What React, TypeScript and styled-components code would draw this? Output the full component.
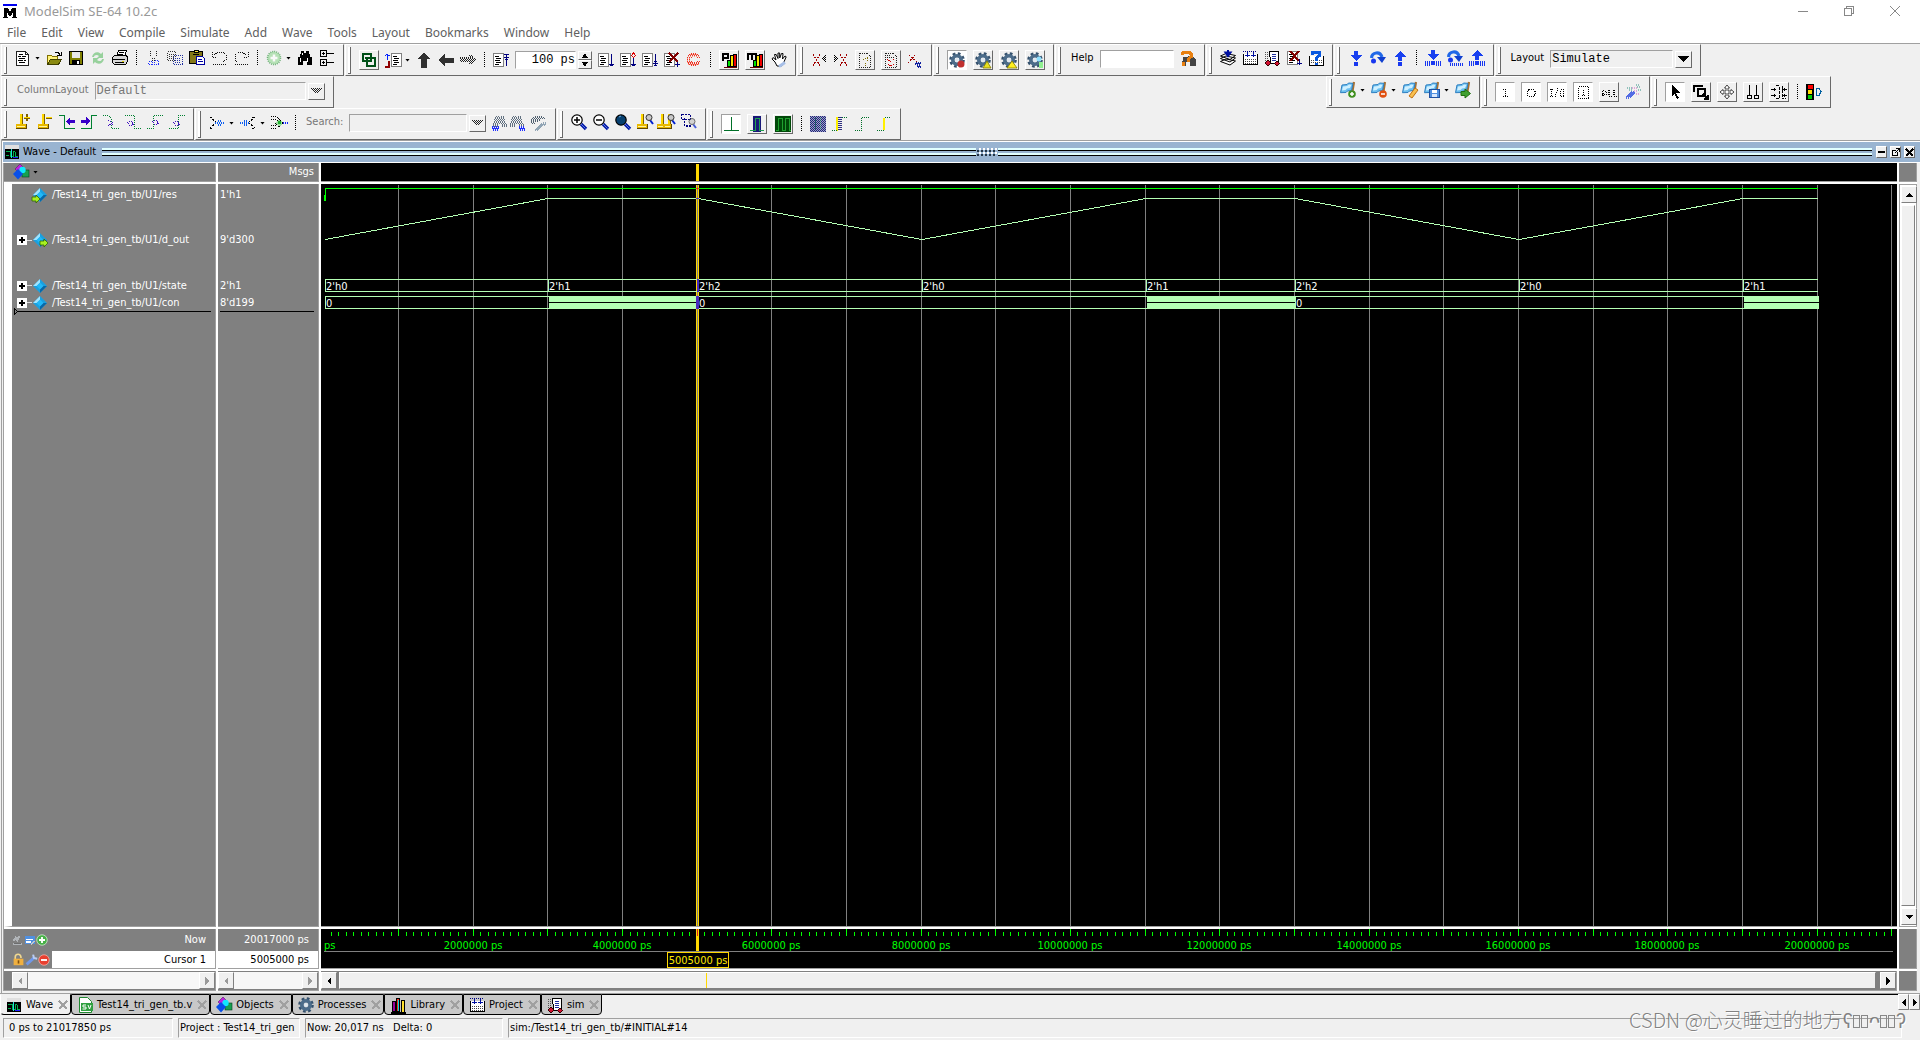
import React, { ReactNode } from 'react';
import styled, { createGlobalStyle, css } from 'styled-components';

const ui = '"DejaVu Sans Condensed", "DejaVu Sans", "Noto Sans", sans-serif';
const menuFont = '"Noto Sans", "Noto Sans CJK SC", sans-serif';
const mono = '"Liberation Mono", monospace';
const face = '#f0f0f0';
const shade = '#a0a0a0';
const dark = '#696969';
const grey = '#808080';
const signal = '#b4ffb4';
const lime = '#00ff00';
const gold = '#ffd700';

const GlobalStyle = createGlobalStyle`
  * { box-sizing: border-box; }
  body { margin: 0; background: ${face}; font: 11px/14px ${ui}; color: #000; overflow: hidden; }
  button, input, select { font: inherit; color: inherit; margin: 0; padding: 0; border: 0; border-radius: 0; background: none; }
`;

const raised = css`
  border: 1px solid;
  border-color: #fff ${dark} ${dark} #fff;
`;
const inset = css`
  border: 1px solid;
  border-color: ${shade} #fff #fff ${shade};
`;

/* ---------- icons ---------- */

const Svg = styled.svg`
  display: block;
  flex: none;
  fill: none;
  overflow: visible;
  shape-rendering: crispEdges;
`;

const Doc = ({ x = 1, lines = '#000' }: { x?: number; lines?: string }) => (
  <>
    <rect x={x} y="1" width="11" height="14" fill="#808080" />
    <rect x={x + 1} y="2" width="9" height="12" fill="#fff" />
    <path d={`M${x + 2} 4.5h4M${x + 3} 6.5h5M${x + 2} 8.5h5M${x + 3} 10.5h5M${x + 2} 12.5h4`} stroke={lines} />
  </>
);
const Gear = ({ children }: { children?: ReactNode }) => (
  <g shapeRendering="auto">
    <circle cx="8" cy="8" r="6.3" stroke="#34506c" strokeWidth="3" strokeDasharray="2.6 2.35" />
    <circle cx="8" cy="8" r="4.2" stroke="#4c6c8a" strokeWidth="3.6" />
    <circle cx="8" cy="8" r="2" fill="#dfe8f0" />
    {children}
  </g>
);
const Flag = ({ children }: { children?: ReactNode }) => (
  <g shapeRendering="auto">
    <path d="M14 0l-2 12" stroke="#a87030" strokeWidth="2.2" />
    <path d="M2 3l5-.5L8.500 1l4.500.3-1.500 7.200-4 .5L6 10.500l-5.500.2z" fill="#6cc0f0" stroke="#2f7fc0" />
    <path d="M3 4.500l4-.5 2-1.500 2.500.3L10 6l-3 .5-1.500 1.500-3.500.5z" fill="#d0f0ff" />
    {children}
  </g>
);
const Gold = ({ x = 0, w = 11 }: { x?: number; w?: number }) => (
  <>
    <path d={`M${x + 7} 0v10`} stroke="#806000" strokeWidth="2" />
    <path d={`M${x + 6} 0v10`} stroke="#ffd800" strokeWidth="2" />
    <rect x={x + 1} y="10" width={w} height="5" fill="#604800" />
    <rect x={x + 1} y="10" width={w - 1} height="4" fill="#e8b800" />
    <rect x={x + 2} y="12" width={w - 3} height="1" fill="#fff4a0" />
  </>
);
const Lens = ({ fill, children }: { fill: string; children?: ReactNode }) => (
  <g shapeRendering="auto">
    <path d="M10 10l5 5" stroke="#0018a8" strokeWidth="3.4" />
    <path d="M10 10l4.500 4.500" stroke="#6078e0" strokeWidth="1" />
    <circle cx="6" cy="6" r="5.2" fill={fill} stroke="#000" strokeWidth="1.2" />
    {children}
  </g>
);
const MiniLens = () => (
  <g shapeRendering="auto">
    <path d="M13 6l3 4" stroke="#0020d0" strokeWidth="2" />
    <circle cx="12" cy="3.500" r="3" fill="#c8c8c8" stroke="#333" />
  </g>
);
const DimBinoc = ({ x = 0, tail }: { x?: number; tail: string }) => (
  <>
    <path
      d={`M${x + 4} 1.500h3M${x + 9} 1.500h3M${x + 3} 3.500h10M${x + 3} 5.500h10M${x + 2} 7.500h12M${x + 1} 9.500h5M${x + 10} 9.500h5M${x + 1} 11.500h5M${x + 10} 11.500h5M${x + 3} 2.500h10M${x + 2} 4.500h11M${x + 2} 6.500h12M${x + 1} 8.500h14M${x + 1} 10.500h5M${x + 10} 10.500h5`}
      stroke="#607080"
      strokeDasharray="1 1"
    />
    <path d={tail} stroke="#2030ff" strokeWidth="3" strokeDasharray="1 1" />
  </>
);
const Down = () => <path d="M6 1h4v4h4l-6 6-6-6h4z" fill="#1840f0" />;
const Up = () => <path d="M6 11h4V7h4L8 1 2 7h4z" fill="#1840f0" />;
const Over = () => (
  <g shapeRendering="auto">
    <path d="M1.500 8C2 2 10 1 12 7" stroke="#2068e8" strokeWidth="3.200" />
    <path d="M7 7h9l-4 6z" fill="#1040d0" />
    <circle cx="3.500" cy="11" r="2.500" fill="#1838f0" />
  </g>
);
const Bits = () => (
  <>
    <rect x="6" y="11" width="4" height="4" fill="#1838f0" />
    <path d="M0 13.500h5M11 13.500h5" stroke="#1838f0" strokeWidth="5" strokeDasharray="1 1" />
  </>
);
const WaveMark = () => (
  <>
    <rect x="1" y="1" width="14" height="14" fill="#000" />
    <rect x="1" y="1" width="14" height="4" fill="#e0e0e0" />
    <path d="M2 7.500h4v5h3v-5h2M2 11.500h3M11 8v4h3" stroke="#00b050" />
    <path d="M7.500 5v9" stroke="#20e0e0" />
    <path d="M9 13.500h5" stroke="#2020ff" />
  </>
);
const Objects = () => (
  <g shapeRendering="auto">
    <path d="M7 0l5 5-5 5-5-5z" fill="#c020e0" stroke="#502060" strokeWidth=".6" />
    <rect x="9" y="6" width="7" height="7" fill="#18a050" stroke="#084020" strokeWidth=".6" />
    <circle cx="9.500" cy="6" r="3.200" fill="#10e8ff" />
    <path d="M5 5l5 5-5 5.500L0 10z" fill="#0850e8" />
  </g>
);
const Diamond = ({ children }: { children?: ReactNode }) => (
  <g shapeRendering="auto">
    <path d="M8 1l7 7-7 7-7-7z" fill="#18a0e0" />
    <path d="M8 1L1 8h4l3-3z" fill="#a0e4ff" />
    <path d="M8 15l7-7h-4l-3 3z" fill="#0868a8" />
    <path d="M8 4.500L11.500 8 8 11.500 4.500 8z" fill="#20b8f8" />
    {children}
  </g>
);
const arrowGreen = <path d="M0 0h4v-2l4 4-4 4V4H0z" fill="#a8f020" stroke="#306800" strokeWidth=".8" />;
const Bars = ({ letter }: { letter: ReactNode }) => (
  <>
    <rect x="6.500" y="8.500" width="3" height="6" fill="#00e000" stroke="#000" />
    <rect x="9.500" y="3.500" width="3" height="11" fill="#ffe800" stroke="#000" />
    <rect x="12.500" y="2.500" width="3" height="12" fill="#f00000" stroke="#000" />
    <path d="M3 15.500h13" stroke="#600" />
    <g stroke="#000" strokeWidth="2">{letter}</g>
  </>
);
const SimMark = () => (
  <>
    <path d="M5 1h10l-1 5 1 7H7L6 7z" fill="#fff" stroke="#000" />
    <path d="M8 4.500h4M8 6.500h4M8 8.500h4M8 10.500h4" stroke="#2030a0" />
    <path d="M1 2v9M3 2v7" stroke="#555" strokeDasharray="1 1" />
    <path d="M4 10l3 3-3 3-3-3zM13 11l2.500 2.500L13 16l-2.500-2.500z" fill="#d01030" stroke="#300" />
  </>
);
const ProjMark = () => (
  <>
    <path d="M1.500 4v10.500h14V4" stroke="#000" fill="#fff" />
    <path d="M3 9.500h11M3 11.500h11M3 13.500h11" stroke="#444" strokeDasharray="1 1" />
    <path d="M1 1.500h14" stroke="#000080" strokeDasharray="1 1" />
    <path d="M5.500 2v5M11.500 2v5M3 5.500h5M9 5.500h5" stroke="#0010a0" />
  </>
);

const icons: Record<string, ReactNode> = {
  new: (
    <>
      <path d="M1.500 1.500h9l3 3v11h-12z" fill="#fff" stroke="#222" />
      <path d="M10.500 1.500v3h3" stroke="#222" />
      <path d="M4 4.500h4M3 6.500h3M7 6.500h4M4 8.500h6M3 10.500h5M9 10.500h2M4 12.500h6" stroke="#000" />
    </>
  ),
  open: (
    <>
      <path d="M1.500 14.500V5.500h4l1 1h5v3" fill="#fff27a" stroke="#807000" />
      <path d="M1.500 14.500l3-5h11l-3 5z" fill="#8a8a10" stroke="#404000" />
      <path d="M9 2.500h3l2 2M15 2v3.500h-4" stroke="#000" />
    </>
  ),
  save: (
    <>
      <rect x="1.500" y="1.500" width="13" height="13" fill="#808000" stroke="#000" />
      <rect x="4" y="2" width="8" height="6" fill="#e8e8e8" />
      <rect x="4" y="10" width="8" height="5" fill="#000" />
      <rect x="9" y="11" width="2" height="3" fill="#fff" />
    </>
  ),
  refresh: (
    <g shapeRendering="auto" opacity=".55">
      <path d="M2 7c1-5 6-6 9-3l2-2v6H7l2-2C7 4 4 5 4 7z" fill="#50b858" />
      <path d="M14 9c-1 5-6 6-9 3l-2 2V8h6l-2 2c2 2 5 1 5-1z" fill="#50b858" />
    </g>
  ),
  print: (
    <>
      <path d="M4.500 6.500l2-6h8l-2 6" fill="#fff" stroke="#000" />
      <path d="M.5 7.500l2-2h11l2 1v5l-2 3H2.500l-2-2z" fill="#d8d8d8" stroke="#000" />
      <path d="M7 2.500h5M6 4.500h5M1 9.500h12M3 12.500h9" stroke="#000" />
      <rect x="10" y="11" width="2" height="1" fill="#e0d000" />
    </>
  ),
  cut: (
    <g strokeDasharray="1 1">
      <path d="M5.500 1v4l4 6M11.500 1v4l-4 6" stroke="#222" />
      <path d="M3.500 11.500h4v3h-4zM9.500 10.500h4v4h-4z" stroke="#2030ff" />
    </g>
  ),
  copy: (
    <g strokeDasharray="1 1">
      <path d="M.5 1.500h8v9h-8zM2 4.500h5M2 6.500h5M2 8.500h5" stroke="#333" />
      <path d="M6.500 5.500h9v9h-9zM8 8.500h6M8 10.500h6M8 12.500h6" stroke="#2030a0" />
    </g>
  ),
  paste: (
    <>
      <rect x=".5" y="1.500" width="13" height="12" fill="#857818" stroke="#000" />
      <path d="M4 4.500h6M5 2h4v-2h-4z" stroke="#000" fill="#ffe840" />
      <path d="M7.500 6.500h6l2 2v6h-8z" fill="#fff" stroke="#0000a0" />
      <path d="M9 9.500h4M9 11.500h5" stroke="#0000a0" />
    </>
  ),
  undo: <path d="M1 2v5h5M3 5l4-3h5l3 3v5l-3 2M2 14.500h13" stroke="#111" strokeDasharray="1 1" />,
  redo: <path d="M15 2v5h-5M13 5L9 2H5L2 5v4l2 3M2 14.500h13" stroke="#111" strokeDasharray="1 1" />,
  add: (
    <g shapeRendering="auto" opacity=".6">
      <circle cx="8" cy="8" r="6.500" fill="#90d890" stroke="#208830" strokeWidth="1.500" strokeDasharray="1 1" />
      <path d="M8 4.500v7M4.500 8h7" stroke="#fff" strokeWidth="2.500" />
    </g>
  ),
  find: (
    <>
      <path d="M4 1h3v2h2V1h3v3h1v3h2v8h-5v-4H6v4H1V7h2V4h1z" fill="#000" />
      <path d="M3.500 8v4M10.500 8v4M5.500 3v2" stroke="#fff" />
    </>
  ),
  expand: <path d="M1.500.5h6v6h-6zM1.500 9.500h6v6h-6zM8 3.500h7M8 12.500h7M3 3.500h3M4.500 2v3M3 12.500h3M4.500 11v3" stroke="#000" />,
  env: (
    <g strokeWidth="2" stroke="#005018">
      <rect x="2" y="2" width="8" height="7" />
      <rect x="6" y="6" width="8" height="8" />
      <path d="M4 6h6v4" />
    </g>
  ),
  trace: (
    <>
      <Doc x={6} />
      <path d="M5 3H2v5M0 4l2-2 2 2" stroke="#0020ff" />
      <path d="M0 15h4V9" stroke="#900000" strokeWidth="2" />
    </>
  ),
  up: <path d="M8 0l6.500 7H11v9H5V7H1.500z" fill="#303030" />,
  left: <path d="M0 8l7-6v3.500h9v5H7V14z" fill="#303030" />,
  right: <path d="M0 6.500h15M1 7.500h15M0 8.500h16M1 9.500h14M0 5.500h13M9 3.500h3M10 4.500h3M9 11.500h3M10 10.500h3" stroke="#222" strokeDasharray="1 1" />,
  restart: (
    <>
      <Doc x={0} />
      <path d="M13.500 2v12M11 2.500h5M11 5.500h5M12 7.500h3" stroke="#000080" />
    </>
  ),
  run: (
    <>
      <Doc x={0} />
      <path d="M13.500 2v12M11 12.500h5M12 13.500h3" stroke="#000080" />
    </>
  ),
  runCont: (
    <>
      <Doc x={0} />
      <path d="M13.500 5v9M11 12.500h5M12 13.500h3" stroke="#000080" />
      <path d="M13.500 1l2 2.500-2 2-2-2z" stroke="#e00000" />
    </>
  ),
  runAll: (
    <>
      <Doc x={0} />
      <path d="M13.500 2v12M11 11.500h5M12 13.500h3M12 9.500h3" stroke="#000080" />
    </>
  ),
  brk: (
    <>
      <Doc x={0} />
      <path d="M13.500 8v7M11 12.500h5" stroke="#000080" />
      <path d="M5 1l9 9M14 1l-9 9" stroke="#800000" strokeWidth="2" />
    </>
  ),
  stop: (
    <>
      <path d="M5 1.500h6M3 2.500h10M2 3.500h12M2 4.500h12M1 5.500h5M11 5.500h4M1 6.500h4M1 7.500h4M1 8.500h4M1 9.500h5M11 9.500h4M2 10.500h12M2 11.500h12M3 12.500h10M5 13.500h6" stroke="#f03020" strokeDasharray="1 1" />
      <path d="M4 2h8M2 4h12M1 6h4M1 8h3M1 10h5M2 12h12" stroke="#f4a090" strokeDasharray="1 1" />
    </>
  ),
  perf: <Bars letter={<path d="M2 9V2h5v4H2" />} />,
  mem: <Bars letter={<path d="M1 8V2h8v6M5 2v6" />} />,
  hand: (
    <g shapeRendering="auto">
      <path d="M4 10L1 7l1-1.500L5 8 3.500 2.500h1.700L7 6.500V1h1.700V6L10.500 1.500H12L11.500 7l2.500-3 1.200.8L12.500 11l-2 3H6z" fill="#fff" stroke="#000" />
      <path d="M8 14.500l6-4" stroke="#a8c0e8" strokeWidth="3" />
    </g>
  ),
  exPrev: (
    <>
      <path d="M2 2l7 12M9 2L2 14" stroke="#a00000" strokeDasharray="2 1" />
      <path d="M14.500 3v7M13.500 4v5M12.500 5v3M11.500 6v1" stroke="#000" strokeDasharray="1 1" />
    </>
  ),
  exNext: (
    <>
      <path d="M7 2l7 12M14 2L7 14" stroke="#a00000" strokeDasharray="2 1" />
      <path d="M1.500 3v7M2.500 4v5M3.500 5v3M4.500 6v1" stroke="#000" strokeDasharray="1 1" />
    </>
  ),
  docAsk: (
    <g strokeDasharray="1 1">
      <path d="M2.500 1.500h8l3 3v11h-11z" stroke="#222" />
      <path d="M6 7h2l2-1v3l-2 2v3" stroke="#807000" />
    </g>
  ),
  docX: (
    <g strokeDasharray="1 1">
      <path d="M2.500 1.500h8l3 3v11h-11zM4 3.500h4M4 5.500h7" stroke="#222" />
      <path d="M4 7l4 3 4-3M5 12l3 2 3-2" stroke="#d00000" />
    </g>
  ),
  exclude: (
    <>
      <path d="M1 11L9 2M2 3l8 7" stroke="#a00000" strokeDasharray="2 1" />
      <path d="M9 10.500h5M8 11.500h6M10 13.500h4M11 14.500h3" stroke="#1020a0" strokeWidth="2" strokeDasharray="1 1" />
    </>
  ),
  gearStop: <Gear><circle cx="12" cy="12" r="3.500" fill="#c03030" /></Gear>,
  gearWarn: <Gear><path d="M12 9l4 7H8z" fill="#e8e020" stroke="#807800" strokeWidth=".8" /></Gear>,
  gearWarn2: <Gear><path d="M11 9l5 7H6z" fill="#ffee20" stroke="#807800" strokeWidth=".8" /></Gear>,
  gearTip: <Gear><circle cx="12" cy="7" r="2.500" fill="#90e0ff" /><rect x="12" y="10" width="4" height="6" fill="#90f090" /></Gear>,
  helpFind: (
    <>
      <path d="M3 6l-1 9h4v-4h4v4h6V9l-3-4z" fill="#444" />
      <path d="M2 4V2l3-1h4l2 2v3L8 8v3" stroke="#e88010" strokeWidth="3" />
      <path d="M2 11h3v4H2z" fill="#e88010" />
    </>
  ),
  compile: (
    <g shapeRendering="auto">
      <path d="M.5 11.500L6 9l9.500 2-5.500 4zM.5 8.500L6 6l9.500 2-5.500 4zM.5 6L6 3.500l9.500 2L10 9.500z" fill="#fff" stroke="#000" />
      <path d="M8 0v3M5.500 2.500h5L8 6z" stroke="#0010a0" strokeWidth="2" fill="#0010a0" />
    </g>
  ),
  compileAll: <ProjMark />,
  sim: <SimMark />,
  endSim: (
    <>
      <Doc x={1} />
      <path d="M4 1l9 10M13 1L4 11" stroke="#800000" strokeWidth="2" />
      <path d="M13.500 9v6M11 13.500h5" stroke="#000080" />
    </>
  ),
  simHelp: (
    <>
      <path d="M1.500 6v9h14V6" stroke="#000" fill="#fff" />
      <path d="M3 10.500h11M3 12.500h11" stroke="#444" strokeDasharray="1 1" />
      <path d="M4 5V2h7v4L8 8v3M8 13v2" stroke="#0858e0" strokeWidth="3" />
    </>
  ),
  into: <><Down /><rect x="6" y="12" width="4" height="4" fill="#1838f0" /></>,
  over: <Over />,
  out: <><Up /><rect x="6" y="12" width="4" height="4" fill="#1838f0" /></>,
  intoB: <><g transform="translate(0 -1)"><Down /></g><Bits /></>,
  overB: <><g transform="translate(0 -1)"><Over /></g><path d="M3 14.500h13" stroke="#1838f0" strokeWidth="3" strokeDasharray="1 1" /></>,
  outB: <><g transform="translate(0 -1)"><Up /></g><Bits /></>,
  bmAdd: <Flag><circle cx="12" cy="12" r="3.800" fill="#409020" /><path d="M12 10v4M10 12h4" stroke="#fff" strokeWidth="1.500" /></Flag>,
  bmDel: <Flag><circle cx="12" cy="12" r="3.800" fill="#e05010" /><path d="M10 12h4" stroke="#fff" strokeWidth="1.500" /></Flag>,
  bmEdit: <Flag><path d="M7 14l6-8 3 2-6 8z" fill="#f8c050" stroke="#c07010" /></Flag>,
  bmSave: <Flag><rect x="5.500" y="7.500" width="10" height="8" fill="#5090e0" stroke="#2050a0" /><rect x="8" y="8" width="5" height="3" fill="#fff" /><rect x="8" y="12" width="5" height="3" fill="#d8e8ff" /></Flag>,
  bmGo: <Flag><path d="M6 9.500h4V7l5.500 4.500L10 16v-2.500H6z" fill="#40a030" stroke="#207010" /></Flag>,
  one: <path d="M6 5.500h2M8.500 5v8M6 12.500h5" stroke="#000" strokeDasharray="1 1" />,
  oh: <path d="M6 5.500h4l2 2v3l-2 2H6l-2-2v-3z" stroke="#000" strokeDasharray="1 1" />,
  io: <path d="M1 5.500h3M2.500 5v8M1 12.500h3M9 4l-3 9M11.500 5.500h3v7h-3z" stroke="#000" strokeDasharray="1 1" />,
  boxed: <path d="M3.500 2.500h10v12h-10zM8.500 6v6M7 11.500h3" stroke="#000" strokeDasharray="1 1" />,
  all: <path d="M1 12V8l2-2 2 2v4M1 10.500h4M7.500 6v6h3M12.500 6v6h3M2 12V8M8.500 6v6M13.500 6v6" stroke="#000" strokeDasharray="1 1" />,
  wand: (
    <g opacity=".75">
      <path d="M1 13.500h4M1 12.500h5M2 11.500h5M3 10.500h5M4 9.500h5M5 8.500h5M6 7.500h4" stroke="#2040e0" strokeDasharray="1 1" strokeWidth="2" />
      <path d="M2 3.500h6M4 5.500h4M11 .5h4M12 2.500h4M13 5.500h3" stroke="#70b0a8" strokeWidth="2" strokeDasharray="1 1" />
      <path d="M7 3.500h6M9 6.500h4M11 9.500h4" stroke="#d890d0" strokeWidth="2" strokeDasharray="1 1" />
    </g>
  ),
  pointer: <path d="M5 1l8 8h-4l3 5-2 1-2.500-5L5 12z" fill="#000" />,
  zoomMode: (
    <>
      <path d="M1 8V2h9" stroke="#000" strokeWidth="2" />
      <rect x="5" y="5" width="7" height="7" stroke="#000" strokeWidth="2" />
      <path d="M10 10l5 5M15 11v4h-4" stroke="#000" strokeWidth="1.500" />
    </>
  ),
  pan: (
    <g shapeRendering="auto">
      <path d="M8 1l2.500 3H9v3h3V5.500L15 8l-3 2.500V9H9v3h1.500L8 15l-2.500-3H7V9H4v1.500L1 8l3-2.500V7h3V4H5.500z" fill="#fff" stroke="#333" strokeWidth=".9" />
    </g>
  ),
  twoCur: <path d="M4.500 1v10M11.500 1v10M2.500 11.500h4v3h-4zM9.500 11.500h4v3h-4z" stroke="#000" />,
  editMode: (
    <>
      <path d="M5 1.500h3v13H4M11 1.500v13h4" stroke="#000" strokeDasharray="3 1" />
      <path d="M0 5.500h5M3.500 4v3M0 11.500h5M3.500 10v3M11 5.500h5M13.500 4v3M11 11.500h5M13.500 10v3" stroke="#000" />
    </>
  ),
  traffic: (
    <>
      <rect x="0" y="0" width="8" height="16" fill="#000" />
      <rect x="2" y="1" width="5" height="4" fill="#f00" />
      <rect x="2" y="6" width="4" height="4" fill="#fd0" />
      <rect x="2" y="11" width="4" height="4" fill="#0c0" />
      <path d="M10.500 4v8M11 4.500h2l2 3-2 4h-2" stroke="#0060a0" />
    </>
  ),
  curAdd: <><Gold /><path d="M9 3.500h6M12 0v7" stroke="#806000" strokeWidth="2" /><path d="M9 3h6" stroke="#ffd800" /></>,
  curDel: <><Gold /><path d="M9 3.500h6" stroke="#806000" strokeWidth="2" /><path d="M9 3h6" stroke="#ffd800" /></>,
  edgePrev: <><path d="M0 1.500h5.500v13h10" stroke="#008030" /><path d="M7 7l4-4v3h5v3h-5v3z" fill="#3800c8" /></>,
  edgeNext: <><path d="M16 1.500h-5.500v13H0" stroke="#008030" /><path d="M9 7L5 3v3H0v3h5v3z" fill="#3800c8" /></>,
  fallPrev: <><path d="M0 1.500h5.500l3 4v9h8" stroke="#008030" strokeDasharray="1 1" /><path d="M5.500 6l3 3-3 3M9.500 8v4" stroke="#4010c0" strokeDasharray="1 1" /></>,
  fallNext: <><path d="M0 1.500h9.500v13h6" stroke="#008030" strokeDasharray="1 1" /><path d="M2.500 9l3-2 3 3-3 2z" stroke="#4010c0" strokeDasharray="1 1" /></>,
  risePrev: <><path d="M0 14.500h6.500v-13h9" stroke="#008030" strokeDasharray="1 1" /><path d="M5.500 8l3-2 3 3-3 2z" stroke="#4010c0" strokeDasharray="1 1" /></>,
  riseNext: <><path d="M0 14.500h9.500v-13h6" stroke="#008030" strokeDasharray="1 1" /><path d="M4.500 9l3-2 3 3-3 2z" stroke="#4010c0" strokeDasharray="1 1" /></>,
  merge: <><path d="M1 2l6 5M1 13l6-5M1 2h3M1 13h3" stroke="#000" strokeDasharray="2 1" /><path d="M6 7.500h10M9 5.500h4M9 9.500h4" stroke="#1060f0" strokeWidth="2" strokeDasharray="1 1" /></>,
  split: <><path d="M15 2L9 7M15 13L9 8M12 2h3M12 13h3" stroke="#000" strokeDasharray="2 1" /><path d="M0 7.500h9M4 5.500h4M4 9.500h4" stroke="#1060f0" strokeWidth="2" strokeDasharray="1 1" /></>,
  mergeAll: (
    <>
      <path d="M0 1.500h6M0 4.500h5M0 10.500h5M0 13.500h6M6 2l6 5.500L6 13" stroke="#000" strokeDasharray="1 1" />
      <path d="M8 4l4 4-4 4-4-4z" stroke="#000" fill="#a0e0a0" strokeDasharray="1 1" />
      <rect x="7" y="6" width="3" height="3" fill="#20b030" />
      <path d="M12 7.500h5" stroke="#1020ff" strokeWidth="2" strokeDasharray="1 1" />
    </>
  ),
  findPrev: <DimBinoc tail="M0 12.500h7M1 14.500h6" />,
  findNext: <DimBinoc tail="M10 12.500h6M11 14.500h5" />,
  findOpt: (
    <>
      <path d="M4 1.500h8M2 2.500h12M1 3.500h14M0 4.500h10M0 5.500h9M0 6.500h8M0 7.500h4M1 8.500h3" stroke="#506070" strokeDasharray="1 1" />
      <path d="M4 14.500h4M5 13.500h4M6 12.500h4M7 11.500h4M8 10.500h4M9 9.500h5M10 8.500h6M12 7.500h4" stroke="#90a4b4" strokeDasharray="1 1" strokeWidth="2" />
    </>
  ),
  zoomIn: <Lens fill="#fff"><path d="M6 3v6M3 6h6" stroke="#000" strokeWidth="1.500" /></Lens>,
  zoomOut: <Lens fill="#fff"><path d="M3 6h6" stroke="#000" strokeWidth="1.500" /></Lens>,
  zoomFull: <Lens fill="#064070"><path d="M4 3l2-1" stroke="#70a8d8" /></Lens>,
  zoomCur: <><Gold x={-1} w={11} /><MiniLens /></>,
  zoomTwo: <><Gold x={-3} w={8} /><Gold x={4} w={8} /><MiniLens /></>,
  zoomArea: <><path d="M.5.5h9v5h-9zM3.500 4v8h6" stroke="#000080" strokeWidth="1.500" strokeDasharray="2 1" /><g opacity=".7" transform="translate(-1 4)"><MiniLens /></g></>,
  wfCursor: <path d="M8.500 1v13M1 14.500h15" stroke="#007028" />,
  wfBlue: <><rect x="4" y="0" width="8" height="16" fill="#181878" /><path d="M1 14.500h5v-12h4v12h5" stroke="#20a050" /></>,
  wfGreen: <><rect x="0" y="0" width="16" height="16" fill="#004808" /><path d="M1 14.500h2v-12h4v12h3v-12h4v12h2" stroke="#20a030" /></>,
  wfDots: (
    <>
      <rect x="0" y="0" width="16" height="16" fill="#a0a0c8" />
      <path d="M0 .5h16M0 2.500h16M0 4.500h16M0 6.500h16M0 8.500h16M0 10.500h16M0 12.500h16M0 14.500h16" stroke="#202878" strokeDasharray="1 1" />
      <path d="M1 1.500h15M1 3.500h15M1 5.500h15M1 7.500h15M1 9.500h15M1 11.500h15M1 13.500h15M1 15.500h15" stroke="#202878" strokeDasharray="1 1" />
      <path d="M5.500 2v12M10.500 2v12" stroke="#208060" strokeDasharray="1 1" />
    </>
  ),
  wfA: <><path d="M5 1v14" stroke="#fff000" strokeWidth="2" /><path d="M8 1v14" stroke="#303080" strokeWidth="4" strokeDasharray="1 1" /><path d="M0 14.500h6M10 1.500h6" stroke="#007028" strokeDasharray="1 1" /></>,
  wfB: <path d="M1 14.500h6.500v-13h7" stroke="#007028" strokeDasharray="1 1" />,
  wfC: <><path d="M8 2v12" stroke="#fff000" strokeWidth="2" /><path d="M1 14.500h6.500M9 1.500h6" stroke="#007028" strokeDasharray="1 1" /></>,
  wave: <WaveMark />,
  sv: (
    <g shapeRendering="auto">
      <path d="M2.500.5h8l4 4v11h-12z" fill="#fff" stroke="#208830" />
      <rect x="4" y="6" width="12" height="8" fill="#30a040" />
      <path d="M9 8H6v2h3v2H5.500M11 8l1.500 4L14 8" stroke="#fff" />
    </g>
  ),
  objects: <Objects />,
  proc: <Gear />,
  library: (
    <>
      <path d="M1 15.500h15" stroke="#000" strokeWidth="2" />
      <rect x="2.500" y="4.500" width="3" height="10" fill="#909" stroke="#000" />
      <rect x="6.500" y="1.500" width="3" height="13" fill="#f03020" stroke="#000" />
      <rect x="11" y="3" width="3" height="12" fill="#ffe030" stroke="#000" />
      <path d="M8 3v11" stroke="#00d8e0" />
    </>
  ),
  project: <ProjMark />,
  sig: <Diamond />,
  sigIn: <Diamond><g transform="translate(0 10)">{arrowGreen}</g></Diamond>,
  sigOut: <Diamond><g transform="translate(8 9)">{arrowGreen}</g></Diamond>,
  tools: <><path d="M1 13h12M2 9l3-4 2 3 3-5" stroke="#b0b4b8" strokeWidth="3" /><path d="M3 12.500h9" stroke="#555" /></>,
  panelIcon: <><rect x="1" y="3" width="14" height="10" fill="#5090e0" /><path d="M3 7.500h9M3 10.500h6" stroke="#fff" strokeWidth="2" /><path d="M9 14l5-5" stroke="#c0c8d0" strokeWidth="2" /></>,
  plus: <g shapeRendering="auto"><circle cx="8" cy="8" r="7" fill="#48b048" stroke="#d0f0d0" /><path d="M8 4v8M4 8h8" stroke="#fff" strokeWidth="2.500" /></g>,
  minus: <g shapeRendering="auto"><circle cx="8" cy="8" r="7" fill="#e84030" stroke="#f8b0a8" /><path d="M4 8h8" stroke="#fff" strokeWidth="2.500" /></g>,
  lock: <g shapeRendering="auto"><path d="M4 8V5a3.500 3.500 0 017 0v1" stroke="#f0d890" strokeWidth="2" /><rect x="2" y="7" width="12" height="8" fill="#f0b040" /><rect x="7" y="9" width="2" height="4" fill="#805010" /></g>,
  wrench: <g shapeRendering="auto"><path d="M2 14l9-8" stroke="#7098e8" strokeWidth="3.500" /><path d="M10 2l1 4 4 1" stroke="#b8ccf4" strokeWidth="2.500" /></g>,
};

const Icon = ({ name, size = 16 }: { name: string; size?: number }) => (
  <Svg width={size} height={size} viewBox="0 0 16 16" aria-hidden="true">
    {icons[name]}
  </Svg>
);

/* ---------- window frame ---------- */

const Window = styled.div`
  position: relative;
  display: flex;
  flex-direction: column;
  height: 100vh;
`;
const TitleBar = styled.header`
  display: flex;
  align-items: center;
  gap: 7px;
  height: 22px;
  padding: 0 18px 0 3px;
  background: #fff;
  color: #999;
  font: 13px/18px ${menuFont};
`;
const TitleText = styled.h1`
  flex: 1;
  margin: 0;
  font: inherit;
`;
const Caption = styled.div`
  display: flex;
  gap: 34px;
`;
const CaptionButton = styled.button`
  display: flex;
  align-items: center;
  width: 12px;
  height: 20px;
  color: #888;
`;
const MenuBar = styled.nav`
  display: flex;
  gap: 15px;
  height: 21px;
  padding: 0 7px;
  background: #fff;
`;
const MenuItem = styled.button`
  color: #606060;
  font: 12px/20px ${menuFont};
`;
const BarArea = styled.section`
  border-top: 1px solid ${shade};
  padding-left: 1px;
`;
const BarRow = styled.div`
  display: flex;
  gap: 1px;
  height: 32px;
`;
const Spacer = styled.div<{ $basis?: number }>`
  flex: ${(p) => (p.$basis ? `0 1 ${p.$basis}px` : '1')};
`;
const BarFrame = styled.div`
  display: flex;
  align-items: flex-start;
  gap: 8px;
  padding: 2px 8px 0 2px;
  border: 1px solid;
  border-color: #fff ${dark} ${dark} #fff;
`;
const Grip = styled.span`
  width: 3px;
  height: 27px;
  background: #fff;
  border-right: 1px solid ${dark};
  border-bottom: 1px solid ${dark};
`;
const BarBody = styled.div`
  display: flex;
  align-items: center;
  gap: 6px;
  padding-top: 3px;
`;
const ToolBtn = styled.button`
  display: flex;
  align-items: center;
  gap: 4px;
`;
const Pair = styled.div`
  display: flex;
  gap: 1px;
`;
const BoxBtn = styled.button<{ $down?: boolean }>`
  display: flex;
  align-items: center;
  justify-content: center;
  width: 20px;
  height: 20px;
  ${raised}
  ${(p) => p.$down && css`${inset} background: #fff;`}
`;
const Sep = styled.span`
  width: 5px;
  height: 16px;
  background: repeating-linear-gradient(#000 0 1px, transparent 1px 2px) center / 1px 100% no-repeat;
`;
const Caret = styled.span`
  width: 5px;
  height: 3px;
  background: #000;
  clip-path: polygon(0 0, 100% 0, 50% 100%);
`;

const Toolbar = ({ children, label }: { children: ReactNode; label: string }) => (
  <BarFrame role="toolbar" aria-label={label}>
    <Grip />
    <BarBody>{children}</BarBody>
  </BarFrame>
);
/* "name" is a flat tool, "name>" has a drop arrow, "[name" is raised, "(name" is pressed, "|" is a divider */
const Tools = ({ items }: { items: string }) => (
  <>
    {items.split(' ').map((t, i) => {
      if (t === '|') return <Sep key={i} />;
      if (t[0] === '[' || t[0] === '(') {
        return (
          <BoxBtn key={i} $down={t[0] === '('} aria-label={t.slice(1)}>
            <Icon name={t.slice(1)} />
          </BoxBtn>
        );
      }
      const drop = t.endsWith('>');
      const name = drop ? t.slice(0, -1) : t;
      return (
        <ToolBtn key={i} aria-label={name}>
          <Icon name={name} />
          {drop && <Caret />}
        </ToolBtn>
      );
    })}
  </>
);

const Field = styled.div<{ $off?: boolean }>`
  display: flex;
  align-items: center;
  height: 18px;
  gap: 2px;
  color: ${(p) => (p.$off ? '#777' : '#000')};
`;
const FieldLabel = styled.label`
  padding: 0 4px 2px 2px;
`;
const Select = styled.select<{ $w: number }>`
  appearance: none;
  width: ${(p) => p.$w}px;
  height: 18px;
  padding-left: 1px;
  font: 12px/16px ${mono};
  ${inset}
`;
const Text = styled.input<{ $w: number; $white?: boolean }>`
  width: ${(p) => p.$w}px;
  height: 18px;
  text-align: right;
  font: 12px/16px ${mono};
  background: ${(p) => (p.$white ? '#fff' : 'none')};
  ${inset}
`;
const Drop = styled.button`
  display: flex;
  align-items: center;
  justify-content: center;
  width: 17px;
  height: 17px;
  ${raised}
`;
const DropMark = ({ off }: { off?: boolean }) => (
  <Svg width="11" height="6" viewBox="0 0 11 6">
    {off ? <path d="M0 .5h11M1 1.500h9M2 2.500h7M3 3.500h5M4 4.500h3" stroke="#222" strokeDasharray="1 1" /> : <path d="M0 0h11L5.500 6z" fill="#000" />}
  </Svg>
);
const Spin = styled.div`
  display: flex;
  flex-direction: column;
  width: 14px;
`;
const SpinBtn = styled.button`
  display: flex;
  align-items: center;
  justify-content: center;
  height: 9px;
  ${raised}
`;
const Tip = ({ d, w = 6, h = 5, color = '#000' }: { d: 'up' | 'down' | 'left' | 'right'; w?: number; h?: number; color?: string }) => (
  <Svg width={w} height={h} viewBox="0 0 10 10" preserveAspectRatio="none">
    <path fill={color} d={{ up: 'M0 10h10L5 0z', down: 'M0 0h10L5 10z', left: 'M10 0v10L0 5z', right: 'M0 0v10l10-5z' }[d]} />
  </Svg>
);

/* ---------- wave pane ---------- */

const Pane = styled.main`
  flex: 1;
  display: flex;
  flex-direction: column;
  min-height: 0;
  margin-left: 1px;
  border-left: 1px solid ${shade};
  border-top: 1px solid ${shade};
`;
const PaneTitle = styled.div`
  display: flex;
  align-items: center;
  height: 22px;
  padding: 0 5px 0 1px;
  background: #99b4d1;
  border: 1px solid #fff;
  border-right: 0;
`;
const PaneName = styled.h2`
  margin: 0 6px 0 3px;
  font: inherit;
`;
const Stripes = styled.span`
  flex: 1;
  height: 8px;
  background: linear-gradient(#e0ffff 0 2px, #000 2px 3px, #99b4d1 3px 5px, #e0ffff 5px 7px, #000 7px 8px);
`;
const Dots = styled.span`
  width: 20px;
  height: 8px;
  margin: 0 1px;
  background: conic-gradient(#fff 0 25%, transparent 0 50%, #234 0 75%, transparent 0) 0 0 / 4px 4px;
`;
const PaneButtons = styled.div`
  display: flex;
  gap: 3px;
  margin-left: 4px;
`;
const PaneButton = styled.button`
  display: flex;
  align-items: center;
  justify-content: center;
  width: 11px;
  height: 12px;
  background: ${face};
  ${raised}
`;
const Grid = styled.div`
  flex: 1;
  display: grid;
  grid-template: 19px minmax(0, 1fr) 40px 20px / 212px 101px minmax(0, 1fr) 18px;
  gap: 2px;
  margin: 0 3px 2px 1px;
  background: #fff;
  border-left: 1px solid ${shade};
`;
const Cell = styled.div`
  min-width: 0;
  min-height: 0;
  background: ${grey};
  color: #fff;
  border-bottom: 1px solid ${shade};
  border-right: 1px solid ${shade};
`;
const HeadCell = styled(Cell)<{ $right?: boolean }>`
  display: flex;
  align-items: center;
  justify-content: ${(p) => (p.$right ? 'flex-end' : 'flex-start')};
  gap: 4px;
  padding: 0 4px 0 9px;
`;
const NameCell = styled(Cell)`
  padding-top: 2px;
  border-left: 8px solid #fff;
`;
const ValueCell = styled(Cell)`
  padding-top: 2px;
`;
const SignalRow = styled.div<{ $h: number }>`
  display: flex;
  align-items: center;
  height: ${(p) => p.$h}px;
  padding-left: 5px;
`;
const ValueRow = styled(SignalRow)`
  padding-left: 2px;
`;
const SignalName = styled.span`
  margin-left: 4px;
  white-space: nowrap;
`;
const Plus = styled.button<{ $hide?: boolean }>`
  display: flex;
  width: 10px;
  height: 10px;
  background: #fff;
  visibility: ${(p) => (p.$hide ? 'hidden' : 'visible')};
`;
const Link = styled.span<{ $hide?: boolean }>`
  width: 5px;
  height: 1px;
  background: ${(p) => (p.$hide ? 'transparent' : '#ddd')};
`;
const InsertLine = styled.div`
  height: 1px;
  margin: 0 4px 0 2px;
  background: #000;
`;
const InsertMark = styled.div`
  display: flex;
  align-items: center;
  height: 1px;
  margin: 0 4px 0 2px;
  background: #000;
`;
const BlackCell = styled.div`
  min-width: 0;
  min-height: 0;
  overflow: hidden;
  background: #000;
  border-bottom: 1px solid ${shade};
`;
const Chart = styled.svg`
  display: block;
  width: 100%;
  height: 100%;
  fill: none;
  shape-rendering: crispEdges;
  font: 11px ${ui};
`;
const FootCell = styled(Cell)`
  display: flex;
  flex-direction: column;
`;
const FootRow = styled.div<{ $white?: boolean }>`
  display: flex;
  flex: ${(p) => (p.$white ? '0 0 17px' : '1')};
  align-items: center;
  justify-content: flex-end;
  color: ${(p) => (p.$white ? '#000' : '#fff')};
  background: ${(p) => (p.$white ? '#fff' : 'transparent')};
`;
const FootIcons = styled.span`
  display: flex;
  align-items: center;
  align-self: stretch;
  width: 48px;
  padding-left: 8px;
  background: ${grey};
`;
const FootText = styled.span`
  flex: 1;
  padding-right: 9px;
  text-align: right;
`;
const ScrollCell = styled(Cell)<{ $gutter?: boolean }>`
  display: flex;
  padding: 1px 0 1px ${(p) => (p.$gutter ? 8 : 0)}px;
`;
const ScrollBtn = styled.button`
  flex: none;
  display: flex;
  align-items: center;
  justify-content: center;
  width: 16px;
  height: 17px;
  background: ${face};
  border: 1px solid;
  border-color: #fff ${grey} ${grey} #fff;
`;
const Track = styled.span`
  flex: 1;
  background: #f7f7f7;
`;
const Thumb = styled.span`
  flex: 1;
  display: flex;
  justify-content: flex-start;
  margin: 0 4px 0 2px;
  background: ${face};
  border: 1px solid;
  border-color: #fff ${grey} ${grey} #fff;
`;
const ThumbMark = styled.i`
  width: 1px;
  background: ${gold};
`;
const VScroll = styled.div`
  display: flex;
  flex-direction: column;
  min-height: 0;
  padding: 1px;
  background: #fff;
  border: 1px solid ${shade};
`;
const VThumb = styled(Thumb)`
  margin: 2px 0;
`;

const rows = [
  { name: '/Test14_tri_gen_tb/U1/res', value: "1'h1", h: 17, icon: 'sigIn', leaf: true },
  { name: '/Test14_tri_gen_tb/U1/d_out', value: "9'd300", h: 74, icon: 'sigOut' },
  { name: '/Test14_tri_gen_tb/U1/state', value: "2'h1", h: 17, icon: 'sig' },
  { name: '/Test14_tri_gen_tb/U1/con', value: "8'd199", h: 17, icon: 'sig' },
];

const PER = 74.65;
const CURSOR_PS = 5005000;
const RANGE_PS = 21017850;
const at = (n: number) => Math.floor(3 + PER * n);
const steps = Array.from({ length: 21 }, (_, i) => i + 1);
const ticks = Array.from({ length: 210 }, (_, i) => i + 1);
const stateSegs: [number, string][] = [[0, "2'h0"], [3, "2'h1"], [5, "2'h2"], [8, "2'h0"], [11, "2'h1"], [13, "2'h2"], [16, "2'h0"], [19, "2'h1"]];
const busy: [number, number][] = [[3, 5], [11, 13], [19, 20]];
const END = at(20);
const CUR = at(5);

const WavePlot = () => (
  <Chart>
    {steps.map((n) => (
      <rect key={n} x={at(n)} y="1" width="1" height="100%" fill={grey} />
    ))}
    <rect x={CUR - 1} y="1" width="1" height="100%" fill={gold} />
    <rect x={CUR + 1} y="1" width="1" height="100%" fill={gold} />
    <rect x="3" y="11" width="2" height="6" fill={lime} />
    <rect x="4" y="4" width="1" height="8" fill={lime} />
    <rect x="4" y="4" width={END - 3} height="1" fill={lime} />
    <polyline
      points={[[0, 55], [3, 14], [5, 14], [8, 55], [11, 14], [13, 14], [16, 55], [19, 14], [20, 14]].map(([n, y]) => `${at(n) + 1},${y + 0.5}`).join(' ')}
      stroke={signal}
    />
    <path d={`M4 95.500H${END + 1}M4 107.500H${END + 1}M4 112.500H${END + 1}M4 124.500H${END + 1}`} stroke={signal} />
    {stateSegs.map(([n, t]) => (
      <g key={n}>
        <path d={`M${at(n) + 1.5} 96v11`} stroke={signal} />
        <text x={at(n) + 2} y="106" fill="#fff">{t}</text>
      </g>
    ))}
    {busy.map(([a, b]) => (
      <g key={a}>
        <rect x={at(a) + 2} y="112" width={at(b) - at(a)} height="13" fill={signal} />
        <rect x={at(a) + 2} y="118" width={at(b) - at(a)} height="1" fill="#000" />
      </g>
    ))}
    {[0, 5, 13].map((n) => (
      <g key={n}>
        <path d={`M${at(n) + 1.5} 113v11`} stroke={signal} />
        <text x={at(n) + 2} y="123" fill="#fff">0</text>
      </g>
    ))}
    <rect x={CUR} y="95" width="2" height="13" fill="#4a28c0" />
    <rect x={CUR - 1} y="112" width="3" height="13" fill="#4a28c0" />
    <rect x={CUR - 1} y="4" width="3" height="1" fill="#f02020" />
    <rect x={CUR - 1} y="14" width="3" height="1" fill="#4a28c0" />
  </Chart>
);

const Ruler = () => (
  <Chart>
    {ticks.map((k) => (
      <rect key={k} x={at(k / 10)} y={k % 10 ? 3 : 0} width="1" height={k % 10 ? 4 : 7} fill={lime} />
    ))}
    <text x="3" y="20" fill={lime}>ps</text>
    {steps.filter((n) => n % 2 === 0).map((n) => (
      <text key={n} x={at(n)} y="20" fill={lime} textAnchor="middle">{`${n}000000 ps`}</text>
    ))}
    <rect x="3" y="22" width={at(21) - 1} height="1" fill={grey} />
    <rect x={CUR - 1} y="0" width="3" height="22" fill={gold} />
    <rect x={CUR} y="0" width="1" height="7" fill="#e02020" />
    <rect x={CUR - 30} y="23" width="62" height="16" fill={gold} />
    <rect x={CUR - 29} y="24" width="60" height="14" fill="#000" />
    <text x={CUR + 1} y="35" fill="#ffe800" textAnchor="middle">{`${CURSOR_PS} ps`}</text>
  </Chart>
);

/* ---------- tabs and status ---------- */

const TabStrip = styled.nav`
  display: flex;
  align-items: flex-start;
  height: 23px;
  border-top: 1px solid ${shade};
`;
const Tab = styled.button<{ $on?: boolean }>`
  display: flex;
  align-items: center;
  gap: 4px;
  height: 21px;
  padding: 0 3px 0 5px;
  background: ${(p) => (p.$on ? face : '#c8c8c8')};
  border: 1px solid #000;
  border-top-color: ${(p) => (p.$on ? face : '#000')};
  border-left-color: ${(p) => (p.$on ? '#fff' : '#000')};
  border-radius: 0 0 4px 4px;
`;
const TabClose = styled.span`
  display: flex;
  margin-left: 2px;
`;
const TabRest = styled.span`
  flex: 1;
  border-top: 1px solid #000;
`;
const TabScroll = styled(ScrollBtn)`
  width: 11px;
  height: 16px;
`;
const Status = styled.footer`
  display: flex;
  gap: 5px;
  height: 24px;
  padding: 2px 18px 2px 3px;
`;
const StatusCell = styled.span<{ $w?: number }>`
  flex: ${(p) => (p.$w ? `0 0 ${p.$w}px` : '1')};
  padding: 2px 0 0 1px;
  white-space: pre;
  overflow: hidden;
  ${inset}
`;
const StatusFirst = styled(StatusCell)`
  padding-left: 5px;
`;
const Watermark = styled.div`
  position: absolute;
  right: 14px;
  bottom: 6px;
  color: rgba(110, 110, 110, 0.85);
  text-shadow: 1px 1px 0 #fff;
  font: 300 20px/28px "Noto Sans CJK SC", sans-serif;
  white-space: nowrap;
`;
const Tofu = styled.span`
  display: inline-block;
  width: 7px;
  height: 13px;
  margin-right: 1px;
  border: 1px solid #888;
`;

const tabs: [string, string][] = [
  ['wave', 'Wave'],
  ['sv', 'Test14_tri_gen_tb.v'],
  ['objects', 'Objects'],
  ['proc', 'Processes'],
  ['library', 'Library'],
  ['project', 'Project'],
  ['sim', 'sim'],
];
const menus = ['File', 'Edit', 'View', 'Compile', 'Simulate', 'Add', 'Wave', 'Tools', 'Layout', 'Bookmarks', 'Window', 'Help'];

export default function App() {
  return (
    <Window>
      <GlobalStyle />
      <TitleBar>
        <Svg width="14" height="16" viewBox="0 0 14 16">
          <rect width="14" height="2" y="1" fill="#0000f0" />
          <path d="M1 5h4l2 4 2-4h4v9h1v1H9v-1h1V9l-2 4H6L4 9v5h1v1H0v-1h1z" fill="#000" />
        </Svg>
        <TitleText>ModelSim SE-64 10.2c</TitleText>
        <Caption>
          <CaptionButton aria-label="Minimize">
            <Svg width="10" height="10" viewBox="0 0 10 10" stroke="currentColor"><path d="M0 5.500h10" /></Svg>
          </CaptionButton>
          <CaptionButton aria-label="Restore">
            <Svg width="10" height="10" viewBox="0 0 10 10" stroke="currentColor"><path d="M.5 2.500h7v7h-7zM2.500 2V.5h7v7H8" /></Svg>
          </CaptionButton>
          <CaptionButton aria-label="Close">
            <Svg width="10" height="10" viewBox="0 0 10 10" stroke="currentColor"><path shapeRendering="auto" d="M0 0l10 10M10 0L0 10" /></Svg>
          </CaptionButton>
        </Caption>
      </TitleBar>
      <MenuBar>
        {menus.map((m) => (
          <MenuItem key={m}>{m}</MenuItem>
        ))}
      </MenuBar>

      <BarArea>
        <BarRow>
          <Toolbar label="Standard">
            <Tools items="new> open save refresh print | cut copy paste undo redo | add> find expand" />
          </Toolbar>
          <Toolbar label="Run">
            <Tools items="[env trace> up left right | restart" />
            <Field>
              <Text $w={61} $white aria-label="Run length" defaultValue="100 ps" />
              <Spin>
                <SpinBtn aria-label="Longer"><Tip d="up" /></SpinBtn>
                <SpinBtn aria-label="Shorter"><Tip d="down" /></SpinBtn>
              </Spin>
            </Field>
            <Tools items="run runCont runAll brk stop | [perf [mem hand" />
          </Toolbar>
          <Toolbar label="Coverage">
            <Tools items="exPrev exNext [docAsk [docX exclude" />
          </Toolbar>
          <Toolbar label="Process">
            <Tools items="(gearStop [gearWarn [gearWarn2 [gearTip" />
          </Toolbar>
          <Toolbar label="Help">
            <Field>
              <FieldLabel htmlFor="help">Help</FieldLabel>
              <Text id="help" $w={74} $white />
            </Field>
            <Tools items="helpFind" />
          </Toolbar>
          <Toolbar label="Compile">
            <Tools items="compile compileAll sim endSim simHelp" />
          </Toolbar>
          <Toolbar label="Step">
            <Tools items="into over out | intoB overB outB" />
          </Toolbar>
          <Toolbar label="Layout">
            <Field>
              <FieldLabel htmlFor="layout">Layout</FieldLabel>
              <Select id="layout" $w={123}><option>Simulate</option></Select>
              <Drop aria-label="Choose layout"><DropMark /></Drop>
            </Field>
          </Toolbar>
        </BarRow>
        <BarRow>
          <Toolbar label="Column layout">
            <Field $off>
              <FieldLabel htmlFor="columns">ColumnLayout</FieldLabel>
              <Select id="columns" $w={211}><option>Default</option></Select>
              <Drop aria-label="Choose column layout"><DropMark off /></Drop>
            </Field>
          </Toolbar>
          <Spacer />
          <Toolbar label="Bookmarks">
            <Tools items="bmAdd> bmDel> bmEdit bmSave> bmGo" />
          </Toolbar>
          <Toolbar label="Object filter">
            <Tools items="(one (oh (io (boxed [all wand" />
          </Toolbar>
          <Toolbar label="Mouse mode">
            <Tools items="(pointer [zoomMode [pan [twoCur [editMode | traffic" />
          </Toolbar>
          <Spacer $basis={88} />
        </BarRow>
        <BarRow>
          <Toolbar label="Wave cursor">
            <Tools items="curAdd curDel edgePrev edgeNext fallPrev fallNext risePrev riseNext" />
          </Toolbar>
          <Toolbar label="Search">
            <Tools items="merge> split> mergeAll |" />
            <Field $off>
              <FieldLabel htmlFor="search">Search:</FieldLabel>
              <Text id="search" $w={118} />
              <Drop aria-label="Search history"><DropMark off /></Drop>
            </Field>
            <Pair><Tools items="findPrev findNext" /></Pair>
            <Tools items="findOpt" />
          </Toolbar>
          <Toolbar label="Zoom">
            <Tools items="zoomIn zoomOut zoomFull zoomCur zoomTwo zoomArea" />
          </Toolbar>
          <Toolbar label="Wave display">
            <Tools items="(wfCursor [wfBlue [wfGreen | wfDots wfA wfB wfC" />
          </Toolbar>
        </BarRow>
      </BarArea>

      <Pane>
        <PaneTitle>
          <Icon name="wave" />
          <PaneName>Wave - Default</PaneName>
          <Stripes />
          <Dots />
          <Stripes />
          <PaneButtons>
            <PaneButton aria-label="Minimize pane"><Svg width="7" height="7" viewBox="0 0 7 7"><path d="M0 3h7" stroke="#000" strokeWidth="2" /></Svg></PaneButton>
            <PaneButton aria-label="Undock pane"><Svg width="8" height="8" viewBox="0 0 8 8"><path d="M4 2.500H.5v5h5V4M3 5l4-4M4 .5h3.500V4" stroke="#000" /></Svg></PaneButton>
            <PaneButton aria-label="Close pane"><Svg width="7" height="7" viewBox="0 0 7 7"><path d="M0 0l7 7M7 0L0 7" stroke="#000" strokeWidth="1.500" /></Svg></PaneButton>
          </PaneButtons>
        </PaneTitle>
        <Grid>
          <HeadCell>
            <Icon name="objects" />
            <Caret />
          </HeadCell>
          <HeadCell $right>Msgs</HeadCell>
          <BlackCell>
            <Chart><rect x={CUR - 1} y="1" width="3" height="100%" fill={gold} /></Chart>
          </BlackCell>
          <Cell />

          <NameCell>
            {rows.map((r) => (
              <SignalRow key={r.name} $h={r.h}>
                <Plus $hide={r.leaf} aria-label={`Expand ${r.name}`}>
                  <Svg width="10" height="10" viewBox="0 0 10 10"><path d="M5 2v6M2 5h6" stroke="#000" strokeWidth="2" /></Svg>
                </Plus>
                <Link $hide={r.leaf} />
                <Icon name={r.icon} />
                <SignalName>{r.name}</SignalName>
              </SignalRow>
            ))}
            <InsertMark>
              <Svg width="4" height="7" viewBox="0 0 4 7"><path d="M.5.5v6l3-3z" fill={grey} stroke="#000" /></Svg>
            </InsertMark>
          </NameCell>
          <ValueCell>
            {rows.map((r) => (
              <ValueRow key={r.name} $h={r.h}>{r.value}</ValueRow>
            ))}
            <InsertLine />
          </ValueCell>
          <BlackCell><WavePlot /></BlackCell>
          <VScroll>
            <ScrollBtn aria-label="Scroll up"><Tip d="up" w={7} h={4} /></ScrollBtn>
            <VThumb />
            <ScrollBtn aria-label="Scroll down"><Tip d="down" w={7} h={4} /></ScrollBtn>
          </VScroll>

          <FootCell>
            <FootRow>
              <FootIcons><Icon name="tools" size={12} /><Icon name="panelIcon" size={12} /><Icon name="plus" size={12} /></FootIcons>
              <FootText>Now</FootText>
            </FootRow>
            <FootRow $white>
              <FootIcons><Icon name="lock" size={13} /><Icon name="wrench" size={13} /><Icon name="minus" size={12} /></FootIcons>
              <FootText>Cursor 1</FootText>
            </FootRow>
          </FootCell>
          <FootCell>
            <FootRow><FootText>20017000 ps</FootText></FootRow>
            <FootRow $white><FootText>{`${CURSOR_PS} ps`}</FootText></FootRow>
          </FootCell>
          <BlackCell><Ruler /></BlackCell>
          <Cell />

          <ScrollCell $gutter>
            <ScrollBtn aria-label="Names left"><Tip d="left" w={4} h={8} color="#999" /></ScrollBtn>
            <Track />
            <ScrollBtn aria-label="Names right"><Tip d="right" w={4} h={8} color="#999" /></ScrollBtn>
          </ScrollCell>
          <ScrollCell>
            <ScrollBtn aria-label="Values left"><Tip d="left" w={4} h={8} color="#999" /></ScrollBtn>
            <Track />
            <ScrollBtn aria-label="Values right"><Tip d="right" w={4} h={8} color="#999" /></ScrollBtn>
          </ScrollCell>
          <ScrollCell>
            <ScrollBtn aria-label="Wave left"><Tip d="left" w={4} h={8} /></ScrollBtn>
            <Thumb><ThumbMark style={{ marginLeft: `${(CURSOR_PS / RANGE_PS) * 100}%` }} /></Thumb>
            <ScrollBtn aria-label="Wave right"><Tip d="right" w={4} h={8} /></ScrollBtn>
          </ScrollCell>
          <Cell />
        </Grid>
      </Pane>

      <TabStrip>
        {tabs.map(([icon, name], i) => (
          <Tab key={name} $on={i === 0}>
            <Icon name={icon} />
            {name}
            <TabClose>
              <Svg width="8" height="8" viewBox="0 0 8 8"><path d="M0 0l8 8M8 0L0 8" stroke="#a0a0a0" strokeWidth="2" /></Svg>
            </TabClose>
          </Tab>
        ))}
        <TabRest />
        <TabScroll aria-label="Tabs left"><Tip d="left" w={4} h={7} /></TabScroll>
        <TabScroll aria-label="Tabs right"><Tip d="right" w={4} h={7} /></TabScroll>
      </TabStrip>
      <Status>
        <StatusFirst $w={170}>0 ps to 21017850 ps</StatusFirst>
        <StatusCell $w={122}>Project : Test14_tri_gen</StatusCell>
        <StatusCell $w={198}>{'Now: 20,017 ns   Delta: 0'}</StatusCell>
        <StatusCell>sim:/Test14_tri_gen_tb/#INITIAL#14</StatusCell>
      </Status>
      <Watermark>
        CSDN @心灵睡过的地方ʕ<Tofu /><Tofu />ᴖ<Tofu /><Tofu />ʔ
      </Watermark>
    </Window>
  );
}
